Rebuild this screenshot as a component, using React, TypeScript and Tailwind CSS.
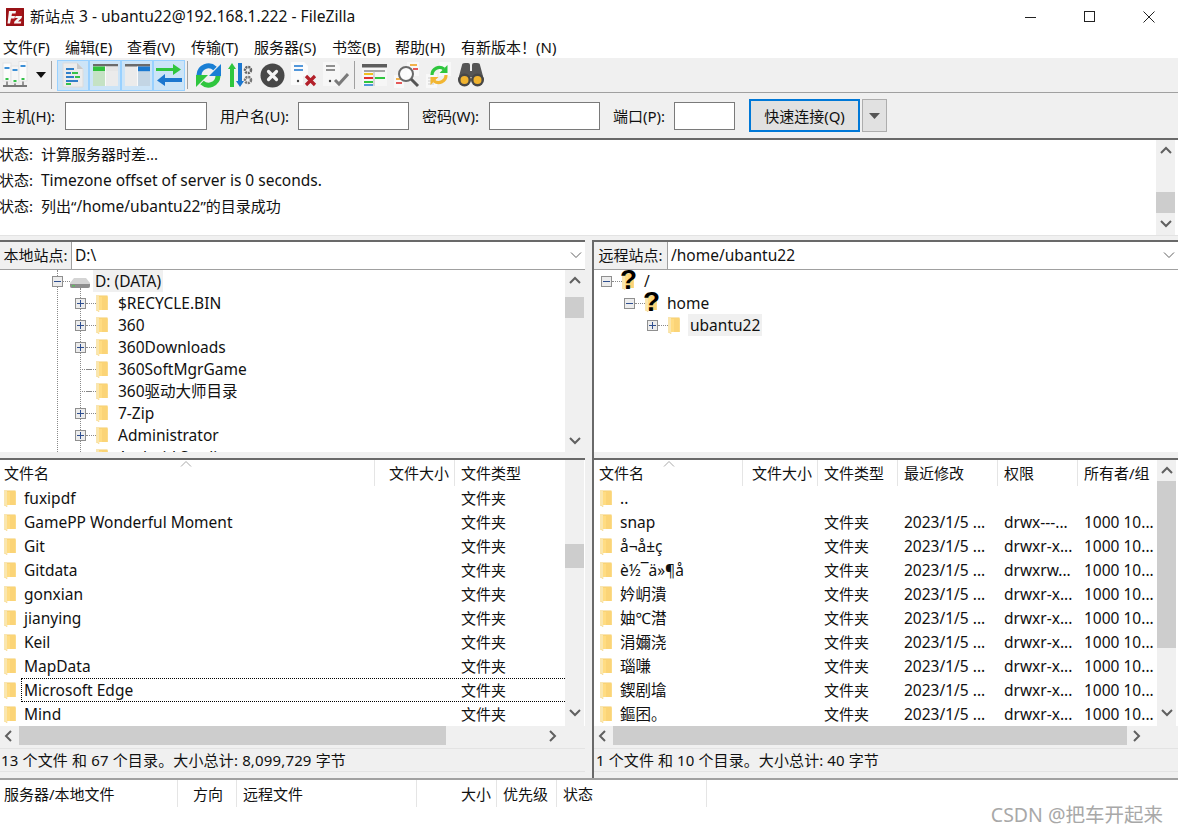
import React from "react";

const Chev = ({ dir, cls = "" }: { dir: "up" | "down" | "left" | "right"; cls?: string }) => {
  const d = { up: "M1 7l5-5 5 5", down: "M1 2l5 5 5-5", left: "M7 1L2 6l5 5", right: "M2 1l5 5-5 5" }[dir];
  return (
    <svg width="12" height="12" viewBox="0 0 12 12" className={cls}>
      <path d={d} fill="none" stroke="#606060" strokeWidth="2" />
    </svg>
  );
};

const VScroll = ({ top, thumb }: { top: string; thumb: string }) => (
  <div className="flex w-[19px] shrink-0 flex-col items-center bg-[#f0f0f0]">
    <div className="flex h-[20px] w-full shrink-0 items-center justify-center"><Chev dir="up" cls="mt-[4px]" /></div>
    <div className={`w-full shrink-0 ${top}`} />
    <div className={`w-full shrink-0 bg-[#cdcdcd] ${thumb}`} />
    <div className="flex-1" />
    <div className="flex h-[20px] w-full shrink-0 items-center justify-center"><Chev dir="down" /></div>
  </div>
);

const Folder = () => (
  <svg width="12" height="17" viewBox="0 0 12 17" className="shrink-0">
    <path d="M0 .5h11.500V15H3.200v2L0 15.200z" fill="#f3cc6c" />
    <path d="M3 1.500h8.500V15H3z" fill="#ffdc82" />
    <path d="M0 .5h3v15.800L0 15.200z" fill="#fae6ae" />
    <path d="M6 1.500h5.500V15H6z" fill="#fbd477" />
  </svg>
);

const Question = () => (
  <div className="relative h-[17px] w-[12px] shrink-0">
    <Folder />
    <span className="absolute left-[-2px] top-[-2px] font-['Liberation_Sans',sans-serif] text-[28px] font-bold leading-[18px] text-black">?</span>
  </div>
);

const Drive = () => (
  <svg width="20" height="12" viewBox="0 0 20 12" className="mt-[3px] shrink-0">
    <path d="M4 1h12l4 5v3a2 2 0 0 1-2 2H2a2 2 0 0 1-2-2V6z" fill="#d4d4d4" />
    <path d="M0 7h20v2a2 2 0 0 1-2 2H2a2 2 0 0 1-2-2z" fill="#8d8d8d" />
    <rect x="2" y="8" width="3" height="1.500" fill="#5fb85f" />
  </svg>
);

const Expander = ({ open }: { open?: boolean }) => (
  <div className="relative flex h-[11px] w-[11px] shrink-0 items-center justify-center border border-[#8f8f8f] bg-[#ececec]">
    <div className="h-px w-[7px] bg-[#2f4f8f]" />
    {!open && <div className="absolute h-[7px] w-px bg-[#2f4f8f]" />}
  </div>
);

const TreeRow = ({
  pl, box, open, icon, label, hl, conn, gap,
}: { pl: string; box: boolean; open?: boolean; icon: React.ReactNode; label: string; hl?: boolean; conn: string; gap: string }) => (
  <div className={`flex h-[22px] shrink-0 items-center ${pl}`}>
    {box ? <Expander open={open} /> : <div className="h-[11px] w-[11px] shrink-0 -translate-y-[5px] ml-[5px] mr-[-5px] border-b border-dotted border-[#8a8a8a]" />}
    <div className={`h-px shrink-0 border-t border-dotted border-[#8a8a8a] ${conn}`} />
    {icon}
    <span className={`${gap} whitespace-nowrap px-[2px] text-[15.500px] leading-[22px] ${hl ? "bg-[#f0f0f0]" : ""}`}>{label}</span>
  </div>
);

const ListRow = ({ cols, widths, focus, folderCls }: { cols: string[]; widths: string[]; focus?: boolean; folderCls: string }) => (
  <div className="relative flex h-[24px] shrink-0 items-center whitespace-nowrap">
    {focus && <div className="absolute inset-y-0 left-[21px] right-0 border-y border-l border-dotted border-black" />}
    <div className={`flex items-center overflow-hidden ${widths[0]} ${folderCls}`}>
      <Folder />
      <span className="ml-[8px] text-[15.500px]">{cols[0]}</span>
    </div>
    {cols.slice(1).map((c, i) => (
      <div key={i} className={`overflow-hidden pl-[6px] ${widths[i + 1]} ${i >= 2 ? "text-[15.500px]" : ""}`}>{c}</div>
    ))}
  </div>
);

const HeadCell = ({ w, label, right, last }: { w: string; label: string; right?: boolean; last?: boolean }) => (
  <div className={`flex h-[26px] shrink-0 items-center overflow-hidden whitespace-nowrap ${w} ${right ? "justify-end pr-[5px]" : "pl-[6px]"} ${last ? "" : "border-r border-[#e5e5e5]"}`}>{label}</div>
);

const Sort = ({ cls }: { cls: string }) => (
  <svg width="12" height="6" viewBox="0 0 12 6" className={`absolute top-[1px] ${cls}`}>
    <path d="M1 5.500l5-5 5 5" fill="none" stroke="#a8a8a8" />
  </svg>
);

const HScroll = ({ thumb, end }: { thumb: string; end: string }) => (
  <div className="flex h-[19px] w-full shrink-0 items-center bg-[#f0f0f0]">
    <div className="flex w-[19px] shrink-0 justify-center"><Chev dir="left" /></div>
    <div className={`h-full shrink-0 bg-[#cdcdcd] ${thumb}`} />
    <div className="flex-1" />
    <div className={`flex w-[19px] shrink-0 justify-center ${end}`}><Chev dir="right" /></div>
  </div>
);

const Tool = ({ children, w = "w-[32px]" }: { children: React.ReactNode; w?: string }) => (
  <div className={`flex h-[30px] shrink-0 items-center justify-center ${w}`}>{children}</div>
);

const Active = ({ children }: { children: React.ReactNode }) => (
  <div className="flex h-[31px] w-[32px] shrink-0 items-center justify-center border border-[#99d1ff] bg-[#cce4f7]">{children}</div>
);

const Sep = ({ cls }: { cls: string }) => <div className={`h-[28px] w-px shrink-0 bg-[#a0a0a0] ${cls}`} />;

const IcoSites = () => (
  <svg width="26" height="28" viewBox="0 0 26 28">
    <path d="M1 25h24" stroke="#777" strokeWidth="2" />
    <path d="M5 20v5M13 22v3M21 20v5" stroke="#777" strokeWidth="1.500" />
    <rect x="1" y="2" width="8" height="18" fill="#fcfcfc" stroke="#e4e4e4" />
    <rect x="9" y="5" width="8" height="17" fill="#f6f6f6" stroke="#e4e4e4" />
    <rect x="17" y="0.500" width="8" height="19.500" fill="#fcfcfc" stroke="#e4e4e4" />
    <path d="M2.500 7h5M10.500 9h5M18.500 5h5" stroke="#3c8fd6" strokeWidth="2" />
    <path d="M3.500 18h3M11.500 20h3M19.500 18h3" stroke="#35c24a" strokeWidth="2" />
  </svg>
);
const IcoLog = () => (
  <svg width="22" height="26" viewBox="0 0 22 26">
    <path d="M1 1h14l6 6v18H1z" fill="#ececec" stroke="#dcdcdc" />
    <path d="M15 1v6h6z" fill="#c8c8c8" />
    <path d="M4 7h8M4 11h5M4 15h8M4 19h12" stroke="#2f7fc9" strokeWidth="1.800" />
    <path d="M10 11h6M13 15h5M4 22h5" stroke="#35c24a" strokeWidth="1.800" />
  </svg>
);
const IcoWin = ({ side }: { side: "l" | "r" }) => (
  <svg width="25" height="22" viewBox="0 0 25 22">
    <rect width="25" height="22" fill="#ebebeb" />
    <rect width="25" height="2.500" fill="#6b6b6b" />
    {side === "l" ? (
      <>
        <rect y="2.500" width="25" height="4.500" fill="#e6e6e6" />
        <rect y="2.500" width="12" height="4.500" fill="#30c13d" />
        <rect y="7" width="12" height="15" fill="#c5e2c4" />
        <rect x="12" y="2.500" width="1" height="19.500" fill="#fafafa" />
      </>
    ) : (
      <>
        <rect x="13" y="2.500" width="12" height="5" fill="#1a79d0" />
        <rect x="13" y="7.500" width="12" height="14.500" fill="#c3d5e4" />
        <rect x="12" y="2.500" width="1" height="19.500" fill="#fafafa" />
      </>
    )}
  </svg>
);
const IcoXfer = () => (
  <svg width="26" height="24" viewBox="0 0 26 24">
    <path d="M0 5h17V1l8 5.500-8 5.500V8H0z" fill="#2fc63e" />
    <path d="M26 15H9v-4l-8 6.500 8 5.500v-4h17z" fill="#1c77cf" />
  </svg>
);
const IcoRefresh = () => (
  <svg width="27" height="27" viewBox="0 0 27 27">
    <path d="M4 13A9.500 9.500 0 0 1 20 6.500" fill="none" stroke="#1a7fd4" strokeWidth="5" />
    <path d="M26 2v12H14z" fill="#1a7fd4" />
    <path d="M23 14A9.500 9.500 0 0 1 7 20.500" fill="none" stroke="#2fc63e" strokeWidth="5" />
    <path d="M1 25V13h12z" fill="#2fc63e" />
  </svg>
);
const IcoFilter = () => (
  <svg width="26" height="26" viewBox="0 0 26 26">
    <path d="M5 1l4 6H7v18H3V7H1z" fill="#2fc63e" />
    <path d="M13 25l4-6h-2V1h-4v18H9z" fill="#1c77cf" />
    <circle cx="21" cy="8" r="3" fill="none" stroke="#666" strokeWidth="2.500" strokeDasharray="2 .8" />
    <circle cx="21" cy="18" r="3" fill="none" stroke="#777" strokeWidth="2.500" strokeDasharray="2 .8" />
  </svg>
);
const IcoCancel = () => (
  <svg width="25" height="25" viewBox="0 0 25 25">
    <circle cx="12.500" cy="12.500" r="12" fill="#484848" />
    <path d="M8.500 8.500l8 8M16.500 8.500l-8 8" stroke="#f4f4f4" strokeWidth="3.200" strokeLinecap="round" />
  </svg>
);
const IcoDisc = () => (
  <svg width="26" height="26" viewBox="0 0 26 26">
    <path d="M0 0h13l4 4v10h-5v9H0z" fill="#fbfbfb" />
    <path d="M3 4h9M3 8h9" stroke="#1c77cf" strokeWidth="1.600" />
    <circle cx="7" cy="19" r="1.200" fill="#444" />
    <path d="M15 14l9 9M24 14l-9 9" stroke="#b3202a" strokeWidth="3.200" />
  </svg>
);
const IcoRecon = () => (
  <svg width="26" height="26" viewBox="0 0 26 26">
    <path d="M0 0h13l4 4v20H0z" fill="#f7f7f7" />
    <path d="M3 4h9M3 8h9" stroke="#6d6d6d" strokeWidth="1.600" />
    <circle cx="7" cy="19" r="1.200" fill="#444" />
    <path d="M12 18l4 4 9-10" fill="none" stroke="#7a7a7a" strokeWidth="3" />
  </svg>
);
const IcoMsg = () => (
  <svg width="26" height="24" viewBox="0 0 26 24">
    <rect y="1" width="25" height="22" fill="#f6f6f6" />
    <rect y="1" width="25" height="3.500" fill="#5d5d5d" />
    <path d="M2 8h21" stroke="#555" strokeWidth="1" />
    <path d="M2 11h9" stroke="#f0c020" strokeWidth="2" />
    <path d="M2 15h9" stroke="#e03030" strokeWidth="2" />
    <path d="M13 15h10" stroke="#2fc63e" strokeWidth="2" />
    <path d="M2 19h9" stroke="#2fc63e" strokeWidth="2" />
    <path d="M2 22h9" stroke="#1c77cf" strokeWidth="1.500" />
    <path d="M12 8v15" stroke="#b8b8b8" />
  </svg>
);
const IcoSearch = () => (
  <svg width="26" height="26" viewBox="0 0 26 26">
    <rect x="13" y="0" width="12" height="14" fill="#f8f8f8" />
    <path d="M16 3h7" stroke="#f0a020" strokeWidth="1.600" />
    <path d="M19 7h5" stroke="#e03030" strokeWidth="1.600" />
    <rect x="0" y="13" width="10" height="13" fill="#f8f8f8" />
    <path d="M2 17h5" stroke="#f0a020" strokeWidth="1.600" />
    <path d="M2 21h6" stroke="#e03030" strokeWidth="1.600" />
    <circle cx="12" cy="12" r="7" fill="#ffffffb0" stroke="#6a6a6a" strokeWidth="2" />
    <path d="M17 17l7 7" stroke="#555" strokeWidth="3" />
  </svg>
);
const IcoSync = () => (
  <svg width="26" height="26" viewBox="0 0 26 26">
    <rect x="13" y="0" width="12" height="14" fill="#f8f8f8" />
    <rect x="0" y="12" width="11" height="14" fill="#f8f8f8" />
    <path d="M2 16h6M2 19h6M2 22h6" stroke="#ccc" />
    <path d="M6 13a7.500 7.500 0 0 1 12-6" fill="none" stroke="#2fc63e" strokeWidth="3.200" />
    <path d="M21.500 3v8h-8z" fill="#2fc63e" />
    <path d="M20 13a7.500 7.500 0 0 1-12 6" fill="none" stroke="#f2b632" strokeWidth="3.200" />
    <path d="M4.500 23v-8h8z" fill="#f2b632" />
  </svg>
);
const IcoBino = () => (
  <svg width="26" height="24" viewBox="0 0 26 24">
    <path d="M4 2q0-2 3-2h3q2 0 2 2v6h2V2q0-2 2-2h3q3 0 3 2l4 15H15v-3h-4v3H0z" fill="#555" />
    <circle cx="6.500" cy="17" r="6.500" fill="#474747" />
    <circle cx="19.500" cy="17" r="6.500" fill="#474747" />
    <circle cx="6.500" cy="17" r="4" fill="#f0b32f" />
    <circle cx="19.500" cy="17" r="4" fill="#f0b32f" />
  </svg>
);

const Logo = () => (
  <svg width="18" height="18" viewBox="0 0 18 18" className="shrink-0">
    <rect width="18" height="18" fill="#a9151a" />
    <path d="M1 1h16v16H1z" fill="none" stroke="#7d0f13" strokeWidth="0.800" />
    <path d="M3 3h7l-.5 2.500H6l-.5 2.500h3.500L8.500 10.500H5L4 15.500H1.500z" fill="#f6f6f6" />
    <path d="M9.500 8h6.500l-.4 2-3.600 3.500h3.200l-.4 2H8l.4-2L12 10H9.100z" fill="#f6f6f6" />
  </svg>
);

const Field = ({ w }: { w: string }) => <div className={`h-[28px] shrink-0 border border-[#7a7a7a] bg-white ${w}`} />;

const localTree = [
  ["$RECYCLE.BIN", 1], ["360", 1], ["360Downloads", 1], ["360SoftMgrGame", 0], ["360驱动大师目录", 0],
  ["7-Zip", 1], ["Administrator", 1], ["Android Studio", 1],
] as [string, number][];
const localFiles = ["fuxipdf", "GamePP Wonderful Moment", "Git", "Gitdata", "gonxian", "jianying", "Keil", "MapData", "Microsoft Edge", "Mind"];
const remoteFiles = [
  ["..", "", "", "", "", ""],
  ["snap", "", "文件夹", "2023/1/5 ...", "drwx---...", "1000 10..."],
  ["å¬å±ç", "", "文件夹", "2023/1/5 ...", "drwxr-x...", "1000 10..."],
  ["è½¯ä»¶å", "", "文件夹", "2023/1/5 ...", "drwxrw...", "1000 10..."],
  ["妗岄潰", "", "文件夹", "2023/1/5 ...", "drwxr-x...", "1000 10..."],
  ["妯℃澘", "", "文件夹", "2023/1/5 ...", "drwxr-x...", "1000 10..."],
  ["涓嬭浇", "", "文件夹", "2023/1/5 ...", "drwxr-x...", "1000 10..."],
  ["瑙嗛", "", "文件夹", "2023/1/5 ...", "drwxr-x...", "1000 10..."],
  ["鍥剧墖", "", "文件夹", "2023/1/5 ...", "drwxr-x...", "1000 10..."],
  ["鏂囨。", "", "文件夹", "2023/1/5 ...", "drwxr-x...", "1000 10..."],
];
const localW = ["w-[455px]", "w-[110px]"];
const remoteWidths = ["w-[149px]", "w-[75px]", "w-[80px]", "w-[100px]", "w-[80px]", "w-[79px]"];

const Addr = ({ label, value, w }: { label: string; value: string; w: string }) => (
  <div className="flex h-[30px] shrink-0 border-t-2 border-b border-t-[#696969] border-b-[#a0a0a0]">
    <div className={`flex shrink-0 items-center justify-center border-r border-[#a0a0a0] bg-[#f0f0f0] pb-[1px] ${w}`}>{label}</div>
    <div className="flex flex-1 items-center justify-between bg-white pb-[1px] pl-[3px] pr-[2px]">
      <span className="text-[15.500px]">{value}</span>
      <svg width="14" height="8" viewBox="0 0 14 8"><path d="M2 1.500l5 5 5-5" fill="none" stroke="#606060" /></svg>
    </div>
  </div>
);

export default function App() {
  return (
    <div className="relative flex h-[834px] w-[1178px] flex-col overflow-hidden bg-[#f0f0f0] font-['Noto_Sans','Noto_Sans_CJK_SC',sans-serif] text-[15px] leading-[20px] text-[#111]">
      {/* title bar */}
      <div className="flex h-[33px] shrink-0 items-center bg-white pl-[6px]">
        <Logo />
        <span className="mb-[2px] ml-[6px] whitespace-nowrap">新站点 <span className="text-[15.600px]">3 - ubantu22@192.168.1.222 - FileZilla</span></span>
        <div className="flex-1" />
        <svg width="178" height="14" viewBox="0 0 178 14">
          <path d="M25 7.500h11" stroke="#222" />
          <rect x="84.500" y="1.500" width="10" height="10" fill="none" stroke="#222" />
          <path d="M143.500 1.500l11 11M154.500 1.500l-11 11" stroke="#222" />
        </svg>
      </div>
      {/* menu */}
      <div className="flex h-[25px] shrink-0 items-center whitespace-nowrap bg-white pl-[3px] pt-[3px]">
        <span className="w-[62px]">文件(F)</span>
        <span className="w-[62px]">编辑(E)</span>
        <span className="w-[64px]">查看(V)</span>
        <span className="w-[63px]">传输(T)</span>
        <span className="w-[78px]">服务器(S)</span>
        <span className="w-[63px]">书签(B)</span>
        <span className="w-[66px]">帮助(H)</span>
        <span>有新版本！(N)</span>
      </div>
      {/* toolbar */}
      <div className="flex h-[35px] shrink-0 items-center border-b border-[#a0a0a0] bg-[#f0f0f0] pl-[1px]">
        <Tool w="w-[28px]"><IcoSites /></Tool>
        <svg width="10" height="6" viewBox="0 0 10 6" className="ml-[7px]"><path d="M0 0h10L5 6z" fill="#111" /></svg>
        <Sep cls="ml-[5px] mr-[5px]" />
        <Active><IcoLog /></Active>
        <Active><IcoWin side="l" /></Active>
        <Active><IcoWin side="r" /></Active>
        <Active><IcoXfer /></Active>
        <Sep cls="ml-[2px] mr-[4px]" />
        <Tool><IcoRefresh /></Tool>
        <Tool><IcoFilter /></Tool>
        <Tool><IcoCancel /></Tool>
        <Tool><IcoDisc /></Tool>
        <Tool><IcoRecon /></Tool>
        <Sep cls="ml-[2px] mr-[4px]" />
        <Tool><IcoMsg /></Tool>
        <Tool><IcoSearch /></Tool>
        <Tool><IcoSync /></Tool>
        <Tool><IcoBino /></Tool>
      </div>
      {/* quick connect */}
      <div className="flex h-[47px] shrink-0 items-center whitespace-nowrap border-b-2 border-[#696969] bg-[#f0f0f0] pl-[1px]">
        <span className="w-[64px]">主机(H):</span>
        <Field w="w-[142px]" />
        <span className="ml-[13px] w-[78px]">用户名(U):</span>
        <Field w="w-[111px]" />
        <span className="ml-[13px] w-[67px]">密码(W):</span>
        <Field w="w-[111px]" />
        <span className="ml-[13px] w-[61px]">端口(P):</span>
        <Field w="w-[61px]" />
        <div className="ml-[14px] flex h-[33px] w-[111px] shrink-0 items-center justify-center border-2 border-[#0078d7] bg-[#e1e1e1]">快速连接(Q)</div>
        <div className="ml-[2px] flex h-[33px] w-[25px] shrink-0 items-center justify-center border border-[#adadad] bg-[#e1e1e1]">
          <svg width="11" height="6" viewBox="0 0 11 6"><path d="M0 0h11L5.500 6z" fill="#555" /></svg>
        </div>
      </div>
      {/* log */}
      <div className="flex h-[95px] shrink-0 bg-white">
        <div className="flex flex-1 flex-col whitespace-nowrap pt-[1px]">
          <div className="flex h-[26px] shrink-0 items-center">
            <span className="w-[41px] shrink-0 -translate-x-[1px]">状态:</span>
            <span>计算服务器时差...</span>
          </div>
          <div className="flex h-[26px] shrink-0 items-center">
            <span className="w-[41px] shrink-0 -translate-x-[1px]">状态:</span>
            <span className="text-[15.500px]">Timezone offset of server is 0 seconds.</span>
          </div>
          <div className="flex h-[26px] shrink-0 items-center">
            <span className="w-[41px] shrink-0 -translate-x-[1px]">状态:</span>
            <span>列出“<span className="text-[15.500px]">/home/ubantu22</span>”的目录成功</span>
          </div>
        </div>
        <VScroll top="h-[32px]" thumb="h-[21px]" />
        <div className="w-[3px] shrink-0" />
      </div>
      <div className="h-[5px] shrink-0 border-t border-[#e3e3e3] bg-[#f0f0f0]" />
      {/* panes */}
      <div className="flex h-[538px] shrink-0">
        {/* local */}
        <div className="flex w-[585px] shrink-0 flex-col">
          <Addr label="本地站点:" value="D:\" w="w-[72px]" />
          <div className="flex h-[182px] shrink-0 bg-white">
            <div className="relative flex flex-1 flex-col overflow-hidden">
              <div className="absolute bottom-0 left-[57px] top-0 border-l border-dotted border-[#8a8a8a]" />
              <div className="absolute bottom-0 left-[80px] top-[18px] border-l border-dotted border-[#8a8a8a]" />
              <TreeRow pl="pl-[52px] relative" box open conn="w-[7px]" icon={<Drive />} label="D: (DATA)" hl gap="ml-[3px]" />
              {localTree.map(([n, b]) => (
                <TreeRow key={n} pl="pl-[75px] relative" box={!!b} conn="w-[10px]" icon={<Folder />} label={n} gap="ml-[8px]" />
              ))}
            </div>
            <VScroll top="h-[7px]" thumb="h-[21px]" />
            <div className="w-px shrink-0 bg-[#f0f0f0]" />
          </div>
          <div className="h-[8px] shrink-0 border-b-2 border-[#696969] bg-[#f0f0f0]" />
          <div className="flex h-[266px] shrink-0 bg-white">
            <div className="relative flex w-[565px] shrink-0 flex-col overflow-hidden">
              <Sort cls="left-[180px]" />
              <div className="flex shrink-0">
                <div className="flex h-[26px] w-[375px] shrink-0 items-center border-r border-[#e5e5e5] pl-[4px]">文件名</div>
                <HeadCell w="w-[80px]" label="文件大小" right />
                <HeadCell w="w-[110px]" label="文件类型" last />
              </div>
              {localFiles.map((n) => (
                <ListRow key={n} cols={[n, "文件夹"]} widths={localW} focus={n === "Microsoft Edge"} folderCls="pl-[4px]" />
              ))}
            </div>
            <div className="flex w-[19px] shrink-0 flex-col bg-[#f0f0f0]">
              <div className="h-[84px] shrink-0" />
              <div className="h-[24px] shrink-0 bg-[#cdcdcd]" />
              <div className="flex-1" />
              <div className="flex h-[24px] shrink-0 items-center justify-center"><Chev dir="down" /></div>
            </div>
          </div>
          <HScroll thumb="w-[427px]" end="mr-[22px]" />
          <div className="h-[3px] shrink-0" />
          <div className="flex h-[24px] shrink-0 items-center whitespace-nowrap border-y border-[#e3e3e3] pl-[1px] tracking-[0.15px]">13 个文件 和 67 个目录。大小总计: 8,099,729 字节</div>
        </div>
        <div className="w-[7px] shrink-0" />
        {/* remote */}
        <div className="flex w-[586px] shrink-0 flex-col border-l-2 border-[#696969]">
          <Addr label="远程站点:" value="/home/ubantu22" w="w-[74px]" />
          <div className="flex h-[182px] shrink-0 flex-col bg-white">
            <TreeRow pl="pl-[7px]" box open conn="w-[10px]" icon={<Question />} label="/" gap="ml-[8px]" />
            <TreeRow pl="pl-[30px]" box open conn="w-[10px]" icon={<Question />} label="home" gap="ml-[8px]" />
            <TreeRow pl="pl-[53px]" box conn="w-[10px]" icon={<Folder />} label="ubantu22" hl gap="ml-[8px]" />
          </div>
          <div className="h-[8px] shrink-0 border-b-2 border-[#696969] bg-[#f0f0f0]" />
          <div className="flex h-[266px] shrink-0 bg-white">
            <div className="relative flex w-[563px] shrink-0 flex-col overflow-hidden">
              <Sort cls="left-[69px]" />
              <div className="flex shrink-0">
                <div className="flex h-[26px] w-[149px] shrink-0 items-center border-r border-[#e5e5e5] pl-[5px]">文件名</div>
                <HeadCell w="w-[75px]" label="文件大小" right />
                <HeadCell w="w-[80px]" label="文件类型" />
                <HeadCell w="w-[100px]" label="最近修改" />
                <HeadCell w="w-[80px]" label="权限" />
                <HeadCell w="w-[79px]" label="所有者/组" last />
              </div>
              {remoteFiles.map((r) => (
                <ListRow key={r[0]} cols={r} widths={remoteWidths} folderCls="pl-[6px]" />
              ))}
            </div>
            <div className="flex w-[19px] shrink-0 flex-col bg-[#f0f0f0]">
              <div className="flex h-[21px] shrink-0 items-center justify-center"><Chev dir="up" cls="mt-[3px]" /></div>
              <div className="h-[167px] shrink-0 bg-[#cdcdcd]" />
              <div className="flex-1" />
              <div className="flex h-[24px] shrink-0 items-center justify-center"><Chev dir="down" /></div>
            </div>
            <div className="w-[2px] shrink-0 bg-white" />
          </div>
          <HScroll thumb="w-[514px]" end="mr-[31px]" />
          <div className="h-[3px] shrink-0" />
          <div className="flex h-[24px] shrink-0 items-center whitespace-nowrap border-y border-[#e3e3e3] pl-[2px] tracking-[0.1px]">1 个文件 和 10 个目录。大小总计: 40 字节</div>
        </div>
      </div>
      {/* queue */}
      <div className="flex flex-1 flex-col border-t-2 border-[#a0a0a0] bg-white">
        <div className="flex h-[27px] shrink-0 items-center whitespace-nowrap">
          <div className="flex h-full w-[178px] items-center border-r border-[#e5e5e5] pl-[4px]">服务器/本地文件</div>
          <div className="flex h-full w-[59px] items-center border-r border-[#e5e5e5] pl-[15px]">方向</div>
          <div className="flex h-full w-[180px] items-center border-r border-[#e5e5e5] pl-[6px]">远程文件</div>
          <div className="flex h-full w-[80px] items-center justify-end border-r border-[#e5e5e5] pr-[5px]">大小</div>
          <div className="flex h-full w-[60px] items-center border-r border-[#e5e5e5] pl-[6px]">优先级</div>
          <div className="flex h-full w-[150px] items-center border-r border-[#e5e5e5] pl-[6px]">状态</div>
        </div>
      </div>
      <span className="absolute bottom-[8px] right-[15px] whitespace-nowrap text-[19.500px] leading-[22px] text-[#a8a8a8]">CSDN @把车开起来</span>
    </div>
  );
}
